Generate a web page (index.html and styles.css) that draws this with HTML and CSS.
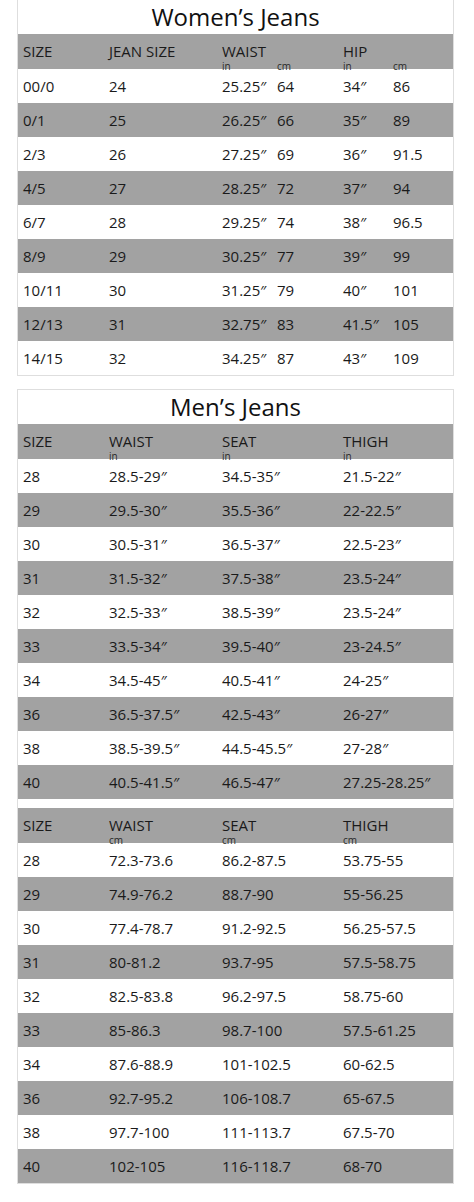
FILE: index.html
```html
<!DOCTYPE html>
<html lang="en">
<head>
<meta charset="utf-8">
<title>Jeans Size Chart</title>
<link rel="stylesheet" href="styles.css">
</head>
<body>
<section class="panel panel--first">
  <h2 class="title">Women’s Jeans</h2>
  <div class="row head cols-w">
    <div class="cell">SIZE</div>
    <div class="cell">JEAN SIZE</div>
    <div class="cell">WAIST<span class="unit">in</span></div>
    <div class="cell"><span class="spacer">&nbsp;</span><span class="unit">cm</span></div>
    <div class="cell">HIP<span class="unit">in</span></div>
    <div class="cell"><span class="spacer">&nbsp;</span><span class="unit">cm</span></div>
  </div>
  <div class="row cols-w"><div>00/0</div><div>24</div><div>25.25″</div><div>64</div><div>34″</div><div>86</div></div>
  <div class="row alt cols-w"><div>0/1</div><div>25</div><div>26.25″</div><div>66</div><div>35″</div><div>89</div></div>
  <div class="row cols-w"><div>2/3</div><div>26</div><div>27.25″</div><div>69</div><div>36″</div><div>91.5</div></div>
  <div class="row alt cols-w"><div>4/5</div><div>27</div><div>28.25″</div><div>72</div><div>37″</div><div>94</div></div>
  <div class="row cols-w"><div>6/7</div><div>28</div><div>29.25″</div><div>74</div><div>38″</div><div>96.5</div></div>
  <div class="row alt cols-w"><div>8/9</div><div>29</div><div>30.25″</div><div>77</div><div>39″</div><div>99</div></div>
  <div class="row cols-w"><div>10/11</div><div>30</div><div>31.25″</div><div>79</div><div>40″</div><div>101</div></div>
  <div class="row alt cols-w"><div>12/13</div><div>31</div><div>32.75″</div><div>83</div><div>41.5″</div><div>105</div></div>
  <div class="row cols-w"><div>14/15</div><div>32</div><div>34.25″</div><div>87</div><div>43″</div><div>109</div></div>
</section>

<section class="panel">
  <h2 class="title">Men’s Jeans</h2>
  <div class="row head cols-m">
    <div class="cell">SIZE</div>
    <div class="cell">WAIST<span class="unit">in</span></div>
    <div class="cell">SEAT<span class="unit">in</span></div>
    <div class="cell">THIGH<span class="unit">in</span></div>
  </div>
  <div class="row cols-m"><div>28</div><div>28.5-29″</div><div>34.5-35″</div><div>21.5-22″</div></div>
  <div class="row alt cols-m"><div>29</div><div>29.5-30″</div><div>35.5-36″</div><div>22-22.5″</div></div>
  <div class="row cols-m"><div>30</div><div>30.5-31″</div><div>36.5-37″</div><div>22.5-23″</div></div>
  <div class="row alt cols-m"><div>31</div><div>31.5-32″</div><div>37.5-38″</div><div>23.5-24″</div></div>
  <div class="row cols-m"><div>32</div><div>32.5-33″</div><div>38.5-39″</div><div>23.5-24″</div></div>
  <div class="row alt cols-m"><div>33</div><div>33.5-34″</div><div>39.5-40″</div><div>23-24.5″</div></div>
  <div class="row cols-m"><div>34</div><div>34.5-45″</div><div>40.5-41″</div><div>24-25″</div></div>
  <div class="row alt cols-m"><div>36</div><div>36.5-37.5″</div><div>42.5-43″</div><div>26-27″</div></div>
  <div class="row cols-m"><div>38</div><div>38.5-39.5″</div><div>44.5-45.5″</div><div>27-28″</div></div>
  <div class="row alt cols-m"><div>40</div><div>40.5-41.5″</div><div>46.5-47″</div><div>27.25-28.25″</div></div>

  <div class="row head head--gap cols-m">
    <div class="cell">SIZE</div>
    <div class="cell">WAIST<span class="unit">cm</span></div>
    <div class="cell">SEAT<span class="unit">cm</span></div>
    <div class="cell">THIGH<span class="unit">cm</span></div>
  </div>
  <div class="row cols-m"><div>28</div><div>72.3-73.6</div><div>86.2-87.5</div><div>53.75-55</div></div>
  <div class="row alt cols-m"><div>29</div><div>74.9-76.2</div><div>88.7-90</div><div>55-56.25</div></div>
  <div class="row cols-m"><div>30</div><div>77.4-78.7</div><div>91.2-92.5</div><div>56.25-57.5</div></div>
  <div class="row alt cols-m"><div>31</div><div>80-81.2</div><div>93.7-95</div><div>57.5-58.75</div></div>
  <div class="row cols-m"><div>32</div><div>82.5-83.8</div><div>96.2-97.5</div><div>58.75-60</div></div>
  <div class="row alt cols-m"><div>33</div><div>85-86.3</div><div>98.7-100</div><div>57.5-61.25</div></div>
  <div class="row cols-m"><div>34</div><div>87.6-88.9</div><div>101-102.5</div><div>60-62.5</div></div>
  <div class="row alt cols-m"><div>36</div><div>92.7-95.2</div><div>106-108.7</div><div>65-67.5</div></div>
  <div class="row cols-m"><div>38</div><div>97.7-100</div><div>111-113.7</div><div>67.5-70</div></div>
  <div class="row alt cols-m"><div>40</div><div>102-105</div><div>116-118.7</div><div>68-70</div></div>
</section>
</body>
</html>
```

FILE: styles.css
```css
html, body {
  margin: 0;
  padding: 0;
  background: #ffffff;
}

body {
  font-family: "Open Sans", "Noto Sans", "Liberation Sans", sans-serif;
  color: #1a1a1a;
  font-size: 15px;
}

.panel {
  width: 435px;
  margin: 13px 0 0 17px;
  border: 1px solid #dedede;
  background: #ffffff;
}

.panel--first {
  margin-top: 0;
  border-top: none;
}

.title {
  margin: 0;
  height: 34px;
  line-height: 34px;
  text-align: center;
  font-size: 24px;
  font-weight: 400;
  color: #111111;
}

.row {
  display: grid;
  height: 34px;
  align-items: center;
  padding-left: 5px;
  white-space: nowrap;
}

.alt,
.head {
  background: #a2a2a2;
}

.cols-w {
  grid-template-columns: 86px 113px 55px 66px 50px 1fr;
}

.cols-m {
  grid-template-columns: 86px 113px 121px 1fr;
}

.head {
  height: 35px;
  align-items: start;
}

.head--gap {
  margin-top: 9px;
}

.cell {
  display: flex;
  flex-direction: column;
  padding-top: 8px;
  line-height: 18px;
}

.spacer {
  display: block;
  height: 18px;
}

.unit {
  display: block;
  margin-top: 1px;
  font-size: 10px;
  line-height: 10px;
  color: #2a2a2a;
}
```
